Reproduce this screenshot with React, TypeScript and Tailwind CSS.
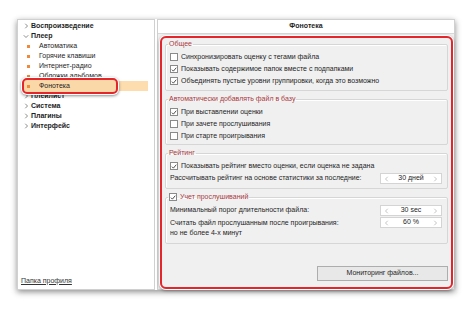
import React from 'react';

const tree = [
  { label: 'Воспроизведение', level: 0, open: false },
  { label: 'Плеер', level: 0, open: true },
  { label: 'Автоматика', level: 1 },
  { label: 'Горячие клавиши', level: 1 },
  { label: 'Интернет-радио', level: 1 },
  { label: 'Обложки альбомов', level: 1 },
  { label: 'Фонотека', level: 1, selected: true },
  { label: 'Плейлист', level: 0, open: false },
  { label: 'Система', level: 0, open: false },
  { label: 'Плагины', level: 0, open: false },
  { label: 'Интерфейс', level: 0, open: false },
];

function Chevron({ dir }: { dir: 'left' | 'right' | 'down' }) {
  const d = dir === 'left' ? 'M5 1 L2 4 L5 7' : dir === 'right' ? 'M3 1 L6 4 L3 7' : 'M1 3 L4 6 L7 3';
  return (
    <svg viewBox="0 0 8 8" className="w-[6px] h-[6px] shrink-0">
      <path d={d} stroke="currentColor" strokeWidth="1" fill="none" />
    </svg>
  );
}

function Check({ checked }: { checked?: boolean }) {
  return (
    <span className="w-[8px] h-[8px] border border-[#8a8a8a] bg-white flex items-center justify-center shrink-0">
      {checked && (
        <svg viewBox="0 0 8 8" className="w-[7px] h-[7px]">
          <path d="M1.2 4.2 L3.2 6.2 L7 1.6" stroke="#2a2a2a" strokeWidth="1.1" fill="none" />
        </svg>
      )}
    </span>
  );
}

function Row({ checked, children }: { checked?: boolean; children: React.ReactNode }) {
  return (
    <div className="h-[12px] flex items-center gap-[3px] pl-[4px]">
      <Check checked={checked} />
      <span>{children}</span>
    </div>
  );
}

function Spin({ value }: { value: string }) {
  return (
    <div className="w-[62px] h-[11px] bg-white border border-[#d4d4d4] flex items-center justify-between px-[3px] text-[#1e1e1e]">
      <span className="text-[#b0b0b0]"><Chevron dir="left" /></span>
      <span>{value}</span>
      <span className="text-[#b0b0b0]"><Chevron dir="right" /></span>
    </div>
  );
}

function Group({ legend, children, className = '' }: { legend: React.ReactNode; children: React.ReactNode; className?: string }) {
  return (
    <fieldset className={`border border-[#d6d6d6] rounded-[2px] shadow-[inset_1px_1px_0_#fff] ${className}`}>
      <legend className="ml-[2px] px-[1px] h-[10px] leading-[10px] text-[#a8393d]">{legend}</legend>
      {children}
    </fieldset>
  );
}

export default function App() {
  return (
    <div className="w-[474px] h-[311px] bg-white pt-[19px] pl-[17px] font-['Liberation_Sans',Arial,sans-serif] text-[7px] text-[#1e1e1e]">
      <div className="w-[438px] h-[271px] flex shadow-[0_2px_6px_rgba(0,0,0,0.45)]">
        {/* Tree */}
        <div className="w-[138px] bg-white border border-[#d0d0d0] flex flex-col justify-between pt-[1px] pb-[3px]">
          <div>
            {tree.map((t) =>
              t.level === 0 ? (
                <div key={t.label} className="h-[10px] flex items-center pl-[5px] gap-[2px] font-bold">
                  <span className="text-[#666]"><Chevron dir={t.open ? 'down' : 'right'} /></span>
                  <span>{t.label}</span>
                </div>
              ) : t.selected ? (
                <div key={t.label} className="relative h-[10px] ml-[5px] mr-[6px] bg-[#fddcae] flex items-center pl-[4px] gap-[9px]">
                  <div className="absolute -left-[1px] -top-[3px] w-[96px] h-[16px] rounded-[5px] border-2 border-[#e2262c] bg-[#fbd8a8] shadow-[0_0_0_1px_#fff,0_1px_3px_1px_rgba(0,0,0,0.45)]" />
                  <span className="relative w-[3px] h-[3px] bg-[#f08a3a]" />
                  <span className="relative">{t.label}</span>
                </div>
              ) : (
                <div key={t.label} className="h-[10px] flex items-center pl-[9px] gap-[9px]">
                  <span className="w-[3px] h-[3px] bg-[#f08a3a]" />
                  <span>{t.label}</span>
                </div>
              )
            )}
          </div>
          <a className="pl-[3px] underline text-[#333]">Папка профиля</a>
        </div>

        {/* Settings page */}
        <div className="w-[298px] ml-[2px] bg-[#f0f0f0] border border-[#d0d0d0] flex flex-col">
          <div className="h-[14px] bg-white border-b border-[#d8d8d8] flex items-center justify-center font-bold">
            Фонотека
          </div>
          <div className="flex-1 ml-[2px] mr-[1px] mt-[2px] mb-[0px] rounded-[6px] border-2 border-[#e2262c] shadow-[0_0_0_1px_#fff,0_1px_3px_1px_rgba(0,0,0,0.35)] flex flex-col px-[3px] pt-[1px]">
            <Group legend="Общее" className="pb-[3px]">
              <div className="pt-[2px]">
                <Row>Синхронизировать оценку с тегами файла</Row>
                <Row checked>Показывать содержимое папок вместе с подпапками</Row>
                <Row checked>Объединять пустые уровни группировки, когда это возможно</Row>
              </div>
            </Group>
            <Group legend="Автоматически добавлять файл в базу" className="mt-[3px] pb-[2px]">
              <div className="pt-[2px]">
                <Row checked>При выставлении оценки</Row>
                <Row>При зачете прослушивания</Row>
                <Row>При старте проигрывания</Row>
              </div>
            </Group>
            <Group legend="Рейтинг" className="mt-[3px] pb-[3px]">
              <div className="pt-[2px]">
                <Row checked>Показывать рейтинг вместо оценки, если оценка не задана</Row>
                <div className="h-[13px] flex items-center justify-between pl-[4px] pr-[5px]">
                  <span>Рассчитывать рейтинг на основе статистики за последние:</span>
                  <Spin value="30 дней" />
                </div>
              </div>
            </Group>
            <Group
              legend={
                <span className="flex items-center gap-[3px]">
                  <Check checked />
                  <span>Учет прослушиваний</span>
                </span>
              }
              className="mt-[3px] pb-[5px]"
            >
              <div className="pt-[2px]">
                <div className="h-[13px] flex items-center justify-between pl-[4px] pr-[5px]">
                  <span>Минимальный порог длительности файла:</span>
                  <Spin value="30 sec" />
                </div>
                <div className="flex justify-between pl-[4px] pr-[5px]">
                  <span className="leading-[10px] pt-[1px]">
                    Считать файл прослушанным после проигрывания:
                    <br />
                    но не более 4-х минут
                  </span>
                  <Spin value="60 %" />
                </div>
              </div>
            </Group>
            <div className="flex-1 flex items-end justify-end pb-[6px]">
              <button className="w-[131px] h-[15px] bg-[#e8e8e8] border border-[#adadad] text-[#1e1e1e]">
                Мониторинг файлов...
              </button>
            </div>
          </div>
        </div>
      </div>
    </div>
  );
}
